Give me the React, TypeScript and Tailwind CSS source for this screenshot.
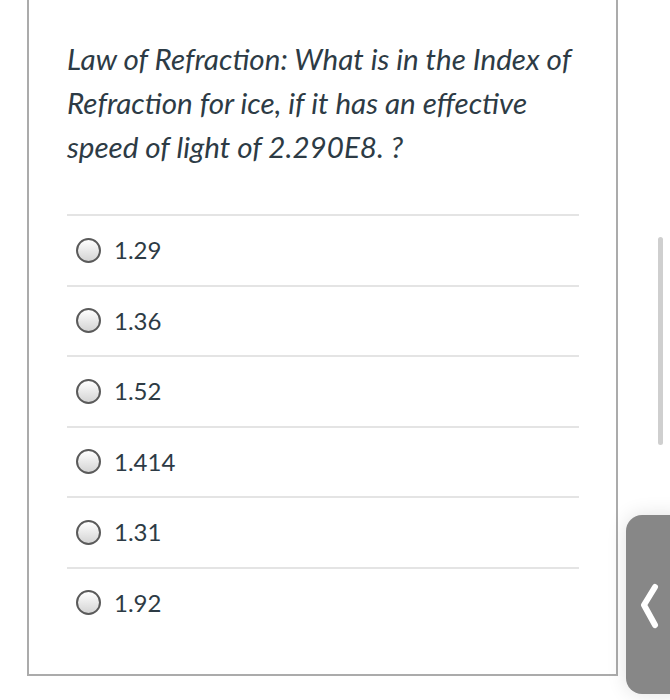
import React from 'react'

const options = ['1.29', '1.36', '1.52', '1.414', '1.31', '1.92']

function Radio() {
  return (
    <span className="block w-[25px] h-[25px] rounded-full border-2 border-[#5a5a5a] bg-gradient-to-b from-white to-[#d4d4d4] shrink-0" />
  )
}

export default function App() {
  return (
    <div className="relative w-[670px] h-[700px] bg-white overflow-hidden" style={{ fontFamily: 'Lato, "Open Sans", sans-serif' }}>
      <div className="ml-[27px] mt-[-2px] w-[591px] border-2 border-[#ababab] pl-[38px] pr-[37px] pt-[37px] pb-[37px]">
        <p className="italic text-[29.6px] leading-[44px] text-[#2d3b45]">
          Law of Refraction: What is in the Index of Refraction for ice, if it has an effective speed of light of 2.290E8. ?
        </p>
        <div className="mt-[45px]">
          {options.map((o) => (
            <div key={o} className="border-t-2 border-[#e4e4e4] h-[70.5px] flex items-center gap-[13px] pl-[9px]">
              <Radio />
              <span className="text-[24px] text-[#2d3b45]">{o}</span>
            </div>
          ))}
        </div>
      </div>
      <div className="absolute left-[658px] top-[237px] w-[5px] h-[208px] rounded-full bg-[#cfcfcf]" />
      <div className="absolute left-[626px] top-[515px] w-[60px] h-[179px] rounded-l-[16px] bg-[#878787] shadow-[0_0_20px_rgba(0,0,0,0.12)] flex items-center pl-[13px]">
        <svg width="22" height="46" viewBox="0 0 22 46" className="mt-[2px]">
          <path d="M16 4 L5 22 L16 42" fill="none" stroke="white" strokeWidth="6" strokeLinecap="round" strokeLinejoin="round" />
        </svg>
      </div>
    </div>
  )
}
